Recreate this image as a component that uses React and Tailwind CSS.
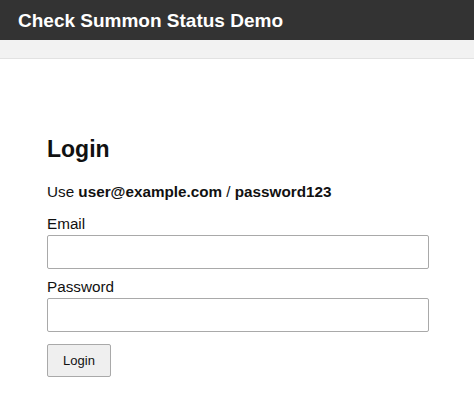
export default function App() {
  return (
    <div className="min-h-[414px] bg-white font-['Liberation_Sans',Arial,sans-serif] text-[#111]">
      <header className="h-[40px] bg-[#333333] flex items-center px-[18px]">
        <h1 className="text-[19px] font-bold text-white leading-none">Check Summon Status Demo</h1>
      </header>
      <div className="h-[19px] bg-[#f2f2f2] border-b border-[#e2e2e2]"></div>
      <main className="pl-[47px] pr-[45px] pt-[77px]">
        <h2 className="text-[23px] font-bold leading-[26px]">Login</h2>
        <p className="mt-[20px] text-[15.25px] leading-[19px]">
          Use <b>user@example.com</b> / <b>password123</b>
        </p>
        <div className="mt-[13px] flex flex-col">
          <label className="text-[15.25px] leading-[19px]">Email</label>
          <input className="mt-[2px] h-[34px] w-[382px] border border-[#a9a9a9] rounded-[2px] bg-white" type="text" />
          <label className="mt-[8px] text-[15.25px] leading-[19px]">Password</label>
          <input className="mt-[2px] h-[34px] w-[382px] border border-[#a9a9a9] rounded-[2px] bg-white" type="password" />
          <div className="mt-[12px]">
            <button className="h-[33px] w-[64px] bg-[#efefef] border border-[#a9a9a9] rounded-[2px] text-[13px] text-[#111]">Login</button>
          </div>
        </div>
      </main>
    </div>
  );
}
